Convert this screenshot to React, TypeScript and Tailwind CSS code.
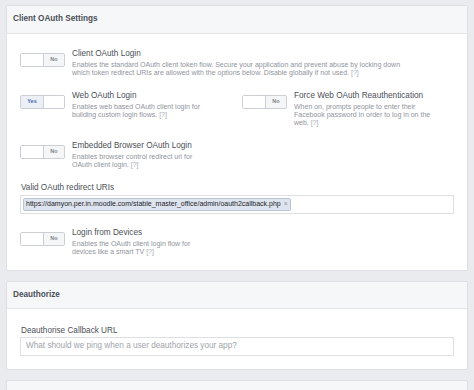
import React from "react";

const Toggle = ({ on }: { on?: boolean }) => (
  <div className="mt-[4.5px] flex h-[14px] w-[45px] shrink-0 overflow-hidden rounded-[2px] border border-[#ccd0d5] bg-white">
    {on ? (
      <>
        <div className="flex w-[22px] items-center justify-center bg-[#eceff5] text-[5.5px] font-bold text-[#4267b2]">Yes</div>
        <div className="flex-1 border-l border-[#ccd0d5] bg-white" />
      </>
    ) : (
      <>
        <div className="w-[22px] bg-white" />
        <div className="flex flex-1 items-center justify-center border-l border-[#ccd0d5] bg-[#f5f6f7] text-[5.5px] font-bold text-[#7f8389]">No</div>
      </>
    )}
  </div>
);

const Q = () => <span className="text-[#a7abb2]"> [?]</span>;

const Row = ({ on, label, lines, last }: { on?: boolean; label: string; lines: string[]; last?: boolean }) => (
  <div className="flex gap-[7px]">
    <Toggle on={on} />
    <div>
      <div className="text-[8.2px] leading-[12px] text-[#4b4f56]">{label}</div>
      <div className="mt-[1px] text-[7px] leading-[8px] text-[#90949c]">
        {lines.map((l, i) => (
          <div key={i} className="whitespace-nowrap">
            {l}
            {i === lines.length - 1 && last !== false ? <Q /> : null}
          </div>
        ))}
      </div>
    </div>
  </div>
);

export default function App() {
  return (
    <div className="min-h-[390px] overflow-hidden bg-[#e9ebee] pt-[5px] font-['Liberation_Sans',Arial,sans-serif]">
      {/* Card 1 */}
      <div className="ml-[6px] w-[462px] rounded-[2px] border border-[#dddfe2] bg-white">
        <div className="flex h-[28px] items-center border-b border-[#e5e5e5] bg-[#f6f7f9] px-[6px] text-[8.2px] font-bold text-[#4b4f56]">
          Client OAuth Settings
        </div>
        <div className="flex flex-col gap-[13px] px-[13px] pb-[14px] pt-[14px]">
          <Row
            label="Client OAuth Login"
            lines={[
              "Enables the standard OAuth client token flow. Secure your application and prevent abuse by locking down",
              "which token redirect URIs are allowed with the options below. Disable globally if not used.",
            ]}
          />
          <div className="grid grid-cols-[222px_1fr]">
            <Row on label="Web OAuth Login" lines={["Enables web based OAuth client login for", "building custom login flows."]} />
            <Row
              label="Force Web OAuth Reauthentication"
              lines={["When on, prompts people to enter their", "Facebook password in order to log in on the", "web."]}
            />
          </div>
          <Row label="Embedded Browser OAuth Login" lines={["Enables browser control redirect uri for", "OAuth client login."]} />
          <div>
            <div className="pl-[1px] text-[8.2px] leading-[12px] text-[#4b4f56]">Valid OAuth redirect URIs</div>
            <div className="mt-[1px] flex h-[19px] w-[434px] items-center border border-[#dddfe2] bg-white px-[2px]">
              <div className="flex h-[13px] items-center gap-[3px] rounded-[2px] border border-[#b9c4d8] bg-[#dee4ee] px-[2px] text-[7px] text-[#1d2129]">
                <span>https://damyon.per.in.moodle.com/stable_master_office/admin/oauth2callback.php</span>
                <span className="text-[7px] text-[#90949c]">×</span>
              </div>
            </div>
          </div>
          <div className="flex gap-[7px]">
            <Toggle />
            <div>
              <div className="text-[8.2px] leading-[12px] text-[#4b4f56]">Login from Devices</div>
              <div className="mt-[1px] text-[7px] leading-[8px] text-[#90949c]">
                <div>Enables the OAuth client login flow for</div>
                <div>
                  devices like a smart TV<Q />
                </div>
              </div>
            </div>
          </div>
        </div>
      </div>

      {/* Card 2 */}
      <div className="ml-[6px] mt-[10px] w-[462px] rounded-[2px] border border-[#dddfe2] bg-white">
        <div className="flex h-[27px] items-center border-b border-[#e5e5e5] bg-[#f6f7f9] px-[6px] text-[8.2px] font-bold text-[#4b4f56]">
          Deauthorize
        </div>
        <div className="px-[13px] pb-[13px] pt-[16px]">
          <div className="pl-[1px] text-[8.2px] leading-[12px] text-[#4b4f56]">Deauthorise Callback URL</div>
          <div className="flex h-[19px] w-[434px] items-center border border-[#dddfe2] bg-white px-[5px] text-[8.2px] text-[#a0a4ab]">
            What should we ping when a user deauthorizes your app?
          </div>
        </div>
      </div>

      {/* Card 3 stub */}
      <div className="ml-[6px] mt-[10px] h-[20px] w-[462px] rounded-[2px] border border-[#dddfe2] bg-[#f6f7f9]" />
    </div>
  );
}
